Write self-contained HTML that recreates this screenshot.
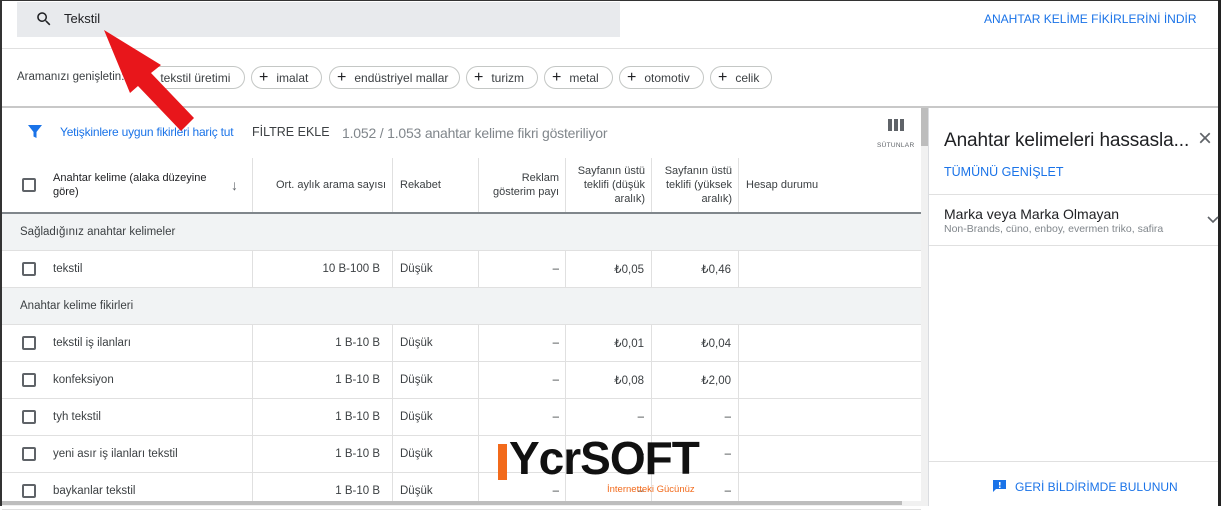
<!DOCTYPE html>
<html><head><meta charset="utf-8"><style>
*{margin:0;padding:0;box-sizing:border-box}
body{width:1221px;height:506px;overflow:hidden;background:#fff;font-family:"Liberation Sans",Arial,sans-serif;color:#3c4043;position:relative}
.a{position:absolute;white-space:nowrap}
.chip{position:absolute;top:66px;height:23px;border:1px solid #c4c7c5;border-radius:12px;font-size:12px;line-height:21px;padding-left:7px;color:#3c4043;overflow:hidden}
.chip b{font-weight:normal;font-size:16px;margin-right:8px;color:#202124}
.vl{position:absolute;width:1px;background:#e0e0e0}
.row{position:absolute;left:2px;width:919px;border-bottom:1px solid #e0e0e0;font-size:11.5px;color:#3c4043}
.grp{background:#f1f3f4}
.cb{position:absolute;left:20px;width:14px;height:14px;border:2px solid #5f6368;border-radius:2px}
.c{position:absolute;top:0;height:100%;display:flex;align-items:center}
.r{justify-content:flex-end}
.hd{font-size:11px;color:#3c4043;line-height:14px}
</style></head><body>
<div class="a" style="left:0;top:0;width:1221px;height:1px;background:#333"></div>
<div class="a" style="left:0;top:0;width:2px;height:506px;background:#333"></div>
<div class="a" style="right:0;top:0;width:3px;height:506px;background:#222"></div>
<div class="a" style="left:17px;top:2px;width:603px;height:35px;background:#e8eaed"></div>
<svg class="a" style="left:35px;top:10px" width="18" height="18" viewBox="0 0 24 24"><path d="M15.5 14h-.8l-.3-.3A6.5 6.5 0 1 0 9.5 16a6.5 6.5 0 0 0 4.2-1.6l.3.3v.8l5 5 1.5-1.5-5-5zm-6 0a4.5 4.5 0 1 1 0-9 4.5 4.5 0 0 1 0 9z" fill="#202124"/></svg>
<div class="a" style="left:64px;top:11px;font-size:13px;color:#202124">Tekstil</div>
<div class="a" style="left:984px;top:12px;font-size:12px;color:#1a73e8">ANAHTAR KELİME FİKİRLERİNİ İNDİR</div>
<div class="a" style="left:2px;top:48px;width:1216px;height:1px;background:#e0e0e0"></div>
<div class="a" style="left:17px;top:71px;font-size:11.5px">Aramanızı genişletin:</div>
<div class="chip" style="left:135px;width:110px"><b>+</b>tekstil üretimi</div>
<div class="chip" style="left:251px;width:71px"><b>+</b>imalat</div>
<div class="chip" style="left:329px;width:131px"><b>+</b>endüstriyel mallar</div>
<div class="chip" style="left:466px;width:72px"><b>+</b>turizm</div>
<div class="chip" style="left:544px;width:69px"><b>+</b>metal</div>
<div class="chip" style="left:619px;width:85px"><b>+</b>otomotiv</div>
<div class="chip" style="left:710px;width:62px"><b>+</b>celik</div>
<div class="a" style="left:2px;top:106px;width:1216px;height:2px;background:#c8c8c8"></div>
<svg class="a" style="left:27px;top:124px" width="16" height="16" viewBox="0 0 16 16"><path d="M1 1h14l-5.5 7v6l-3-1.5V8z" fill="#1a73e8"/></svg>
<div class="a" style="left:60px;top:125px;font-size:12px;color:#1a73e8;letter-spacing:-.2px">Yetişkinlere uygun fikirleri hariç tut</div>
<div class="a" style="left:252px;top:125px;font-size:12.5px;color:#3c4043">FİLTRE EKLE</div>
<div class="a" style="left:342px;top:125px;font-size:14px;color:#80868b;letter-spacing:-.2px">1.052 / 1.053 anahtar kelime fikri gösteriliyor</div>
<div class="a" style="left:888px;top:119px;width:16px;height:12px;background:linear-gradient(90deg,#5f6368 0 4px,#fff 4px 6px,#5f6368 6px 10px,#fff 10px 12px,#5f6368 12px)"></div>
<div class="a" style="left:877px;top:142px;font-size:6.5px;color:#5f6368;letter-spacing:.3px">SÜTUNLAR</div>
<div class="row" style="top:158px;height:56px;border-bottom:2px solid #80868b">
 <div class="cb" style="top:20px"></div>
 <div class="c hd" style="left:51px;width:170px;color:#202124;white-space:normal">Anahtar kelime (alaka düzeyine göre)</div>
 <div class="c" style="left:229px;font-size:14px;color:#5f6368">↓</div>
 <div class="c hd r" style="left:250px;width:134px">Ort. aylık arama sayısı</div>
 <div class="c hd" style="left:398px">Rekabet</div>
 <div class="c hd r" style="left:476px;width:81px;text-align:right">Reklam<br>gösterim payı</div>
 <div class="c hd r" style="left:563px;width:80px;text-align:right;white-space:normal">Sayfanın üstü teklifi (düşük aralık)</div>
 <div class="c hd r" style="left:649px;width:81px;text-align:right;white-space:normal">Sayfanın üstü teklifi (yüksek aralık)</div>
 <div class="c hd" style="left:744px">Hesap durumu</div>
</div>
<div class="vl" style="left:252px;top:158px;height:54px"></div>
<div class="vl" style="left:392px;top:158px;height:54px"></div>
<div class="vl" style="left:478px;top:158px;height:54px"></div>
<div class="vl" style="left:565px;top:158px;height:54px"></div>
<div class="vl" style="left:651px;top:158px;height:54px"></div>
<div class="vl" style="left:738px;top:158px;height:54px"></div>
<div class="row grp" style="top:214px;height:37px"><div class="c" style="left:18px">Sağladığınız anahtar kelimeler</div></div>
<div class="row" style="top:251px;height:37px"><div class="cb" style="top:11px"></div><div class="c" style="left:51px">tekstil</div><div class="c r" style="left:250px;width:128px">10 B-100 B</div><div class="c" style="left:398px">Düşük</div><div class="c r" style="left:476px;width:81px">–</div><div class="c r" style="left:563px;width:79px">₺0,05</div><div class="c r" style="left:649px;width:80px">₺0,46</div></div>
<div class="row grp" style="top:288px;height:37px"><div class="c" style="left:18px">Anahtar kelime fikirleri</div></div>
<div class="row" style="top:325px;height:37px"><div class="cb" style="top:11px"></div><div class="c" style="left:51px">tekstil iş ilanları</div><div class="c r" style="left:250px;width:128px">1 B-10 B</div><div class="c" style="left:398px">Düşük</div><div class="c r" style="left:476px;width:81px">–</div><div class="c r" style="left:563px;width:79px">₺0,01</div><div class="c r" style="left:649px;width:80px">₺0,04</div></div>
<div class="row" style="top:362px;height:37px"><div class="cb" style="top:11px"></div><div class="c" style="left:51px">konfeksiyon</div><div class="c r" style="left:250px;width:128px">1 B-10 B</div><div class="c" style="left:398px">Düşük</div><div class="c r" style="left:476px;width:81px">–</div><div class="c r" style="left:563px;width:79px">₺0,08</div><div class="c r" style="left:649px;width:80px">₺2,00</div></div>
<div class="row" style="top:399px;height:37px"><div class="cb" style="top:11px"></div><div class="c" style="left:51px">tyh tekstil</div><div class="c r" style="left:250px;width:128px">1 B-10 B</div><div class="c" style="left:398px">Düşük</div><div class="c r" style="left:476px;width:81px">–</div><div class="c r" style="left:563px;width:79px">–</div><div class="c r" style="left:649px;width:80px">–</div></div>
<div class="row" style="top:436px;height:37px"><div class="cb" style="top:11px"></div><div class="c" style="left:51px">yeni asır iş ilanları tekstil</div><div class="c r" style="left:250px;width:128px">1 B-10 B</div><div class="c" style="left:398px">Düşük</div><div class="c r" style="left:476px;width:81px">–</div><div class="c r" style="left:563px;width:79px">–</div><div class="c r" style="left:649px;width:80px">–</div></div>
<div class="row" style="top:473px;height:37px"><div class="cb" style="top:11px"></div><div class="c" style="left:51px">baykanlar tekstil</div><div class="c r" style="left:250px;width:128px">1 B-10 B</div><div class="c" style="left:398px">Düşük</div><div class="c r" style="left:476px;width:81px">–</div><div class="c r" style="left:563px;width:79px">–</div><div class="c r" style="left:649px;width:80px">–</div></div>
<div class="vl" style="left:252px;top:251px;height:37px"></div><div class="vl" style="left:392px;top:251px;height:37px"></div><div class="vl" style="left:478px;top:251px;height:37px"></div><div class="vl" style="left:565px;top:251px;height:37px"></div><div class="vl" style="left:651px;top:251px;height:37px"></div><div class="vl" style="left:738px;top:251px;height:37px"></div>
<div class="vl" style="left:252px;top:325px;height:181px"></div><div class="vl" style="left:392px;top:325px;height:181px"></div><div class="vl" style="left:478px;top:325px;height:181px"></div><div class="vl" style="left:565px;top:325px;height:181px"></div><div class="vl" style="left:651px;top:325px;height:181px"></div><div class="vl" style="left:738px;top:325px;height:181px"></div>
<div class="a" style="left:2px;top:501px;width:919px;height:5px;background:#f1f1f1"></div>
<div class="a" style="left:2px;top:501px;width:900px;height:4px;background:#bdbdbd"></div>
<div class="a" style="left:921px;top:108px;width:8px;height:398px;background:#f1f1f1"></div>
<div class="a" style="left:921px;top:108px;width:7px;height:38px;background:#bdbdbd"></div>
<div class="a" style="left:928px;top:108px;width:1px;height:398px;background:#dadce0"></div>
<div class="a" style="left:944px;top:130px;font-size:19px;color:#202124;letter-spacing:-.1px">Anahtar kelimeleri hassasla...</div>
<div class="a" style="left:1198px;top:128px;font-size:24px;color:#5f6368;line-height:22px">×</div>
<div class="a" style="left:944px;top:165px;font-size:12.5px;color:#1a73e8">TÜMÜNÜ GENİŞLET</div>
<div class="a" style="left:929px;top:194px;width:289px;height:1px;background:#e0e0e0"></div>
<div class="a" style="left:944px;top:206px;font-size:14px;color:#202124">Marka veya Marka Olmayan</div>
<div class="a" style="left:944px;top:223px;font-size:10.5px;color:#80868b">Non-Brands, cüno, enboy, evermen triko, safira</div>
<svg class="a" style="left:1207px;top:216px" width="12" height="8" viewBox="0 0 12 8"><path d="M1 1l5 5 5-5" stroke="#5f6368" stroke-width="1.6" fill="none"/></svg>
<div class="a" style="left:929px;top:245px;width:289px;height:1px;background:#e0e0e0"></div>
<div class="a" style="left:929px;top:461px;width:289px;height:1px;background:#e0e0e0"></div>
<svg class="a" style="left:992px;top:479px" width="15" height="14" viewBox="0 0 15 14"><path d="M1 1h13v9H4l-3 3z" fill="#1a73e8"/><rect x="7" y="3" width="1.5" height="3.5" fill="#fff"/><rect x="7" y="7.5" width="1.5" height="1.5" fill="#fff"/></svg>
<div class="a" style="left:1015px;top:480px;font-size:12px;color:#1a73e8">GERİ BİLDİRİMDE BULUNUN</div>
<div class="a" style="left:498px;top:444px;width:9px;height:36px;background:#f26a1b"></div>
<div class="a" style="left:509px;top:433px;font-size:46px;font-weight:bold;color:#111;letter-spacing:-1px;line-height:50px">YcrSOFT</div>
<div class="a" style="left:607px;top:484px;font-size:9.5px;color:#f26a1b">İnternetteki Gücünüz</div>
<svg class="a" style="left:0;top:0" width="260" height="160"><polygon points="104,30 161,65 151,73 194,118 181,131 138,86 130,93" fill="#e8161b"/></svg>
</body></html>
